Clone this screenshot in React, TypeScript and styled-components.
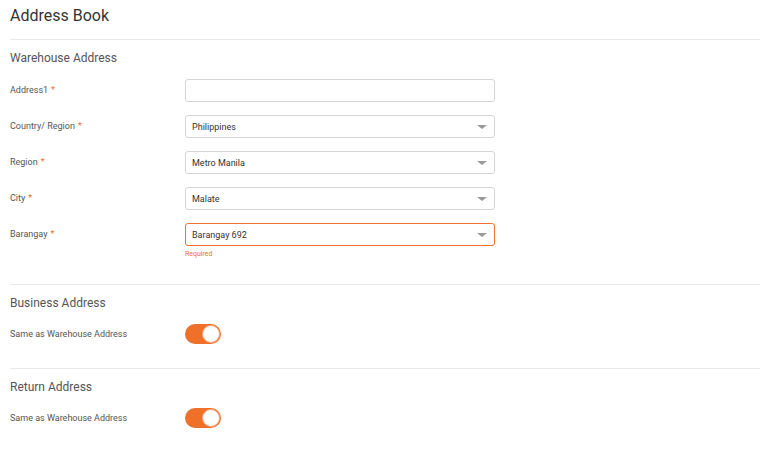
import styled, { createGlobalStyle } from "styled-components";

const GlobalStyle = createGlobalStyle`
    body {
        margin: 0;
        background: #fff;
        font-family: Roboto, "Liberation Sans", sans-serif;
        color: #333;
    }
`

const Page = styled.div`
    padding: 0 8px 0 10px;
    width: 768px;
    box-sizing: border-box;
`

const Header = styled.header`
    padding-bottom: 7px;
    border-bottom: 1px solid #e8e8e8;
`

const Title = styled.h1`
    margin: 0;
    font-size: 16px;
    font-weight: 400;
    line-height: 32px;
    color: #333;
`

const Section = styled.section<{ $bottom: number; $last?: boolean }>`
    padding: 8px 0 ${props => props.$bottom}px 0;
    border-bottom: ${props => props.$last ? 'none' : '1px solid #e8e8e8'};
    display: flex;
    flex-direction: column;
    gap: 13px;
`

const SectionTitle = styled.h2`
    margin: 0 0 -2px 0;
    font-size: 12px;
    font-weight: 400;
    line-height: 20px;
    color: #555;
`

const Row = styled.div`
    display: flex;
    align-items: flex-start;
`

const Label = styled.label`
    width: 175px;
    flex-shrink: 0;
    font-size: 9px;
    line-height: 22px;
    color: #555;
    span {
        color: #f0712c;
        margin-left: 3px;
    }
`

const Field = styled.div`
    width: 310px;
    display: flex;
    flex-direction: column;
`

const Box = styled.div<{ $error?: boolean }>`
    height: 23px;
    box-sizing: border-box;
    border: 1px solid ${props => props.$error ? '#f0712c' : '#d6d6d6'};
    border-radius: 3px;
    display: flex;
    align-items: center;
    justify-content: space-between;
    padding: 0 6px 0 6px;
    font-size: 9px;
    color: #333;
`

const Caret = styled.i`
    width: 0;
    height: 0;
    border-left: 5px solid transparent;
    border-right: 5px solid transparent;
    border-top: 4px solid #999;
    margin-right: 1px;
`

const ErrorText = styled.div`
    margin-top: 2px;
    font-size: 7px;
    line-height: 12px;
    color: #f0712c;
`

const Toggle = styled.div`
    width: 36px;
    height: 20px;
    border-radius: 10px;
    background: #ef7129;
    display: flex;
    align-items: center;
    justify-content: flex-end;
    padding: 0 1px;
    box-sizing: border-box;
    &::after {
        content: '';
        width: 18px;
        height: 18px;
        border-radius: 50%;
        background: #fff;
        box-sizing: border-box;
        border: 1px solid #f5a77a;
    }
`

const ToggleRow = styled(Row)`
    align-items: center;
    ${Label} { line-height: 20px; }
`

type SelectField = { label: string; value: string; error?: string }

const selects: SelectField[] = [
    { label: 'Country/ Region', value: 'Philippines' },
    { label: 'Region', value: 'Metro Manila' },
    { label: 'City', value: 'Malate' },
    { label: 'Barangay', value: 'Barangay 692', error: 'Required' },
]

export default function App() {
    return (
        <Page>
            <GlobalStyle />
            <Header>
                <Title>Address Book</Title>
            </Header>

            <Section $bottom={24}>
                <SectionTitle>Warehouse Address</SectionTitle>
                <Row>
                    <Label>Address1<span>*</span></Label>
                    <Field><Box /></Field>
                </Row>
                {selects.map(s => (
                    <Row key={s.label}>
                        <Label>{s.label}<span>*</span></Label>
                        <Field>
                            <Box $error={!!s.error}>
                                {s.value}
                                <Caret />
                            </Box>
                            {s.error && <ErrorText>{s.error}</ErrorText>}
                        </Field>
                    </Row>
                ))}
            </Section>

            <Section $bottom={24}>
                <SectionTitle>Business Address</SectionTitle>
                <ToggleRow>
                    <Label>Same as Warehouse Address</Label>
                    <Toggle />
                </ToggleRow>
            </Section>

            <Section $bottom={0} $last>
                <SectionTitle>Return Address</SectionTitle>
                <ToggleRow>
                    <Label>Same as Warehouse Address</Label>
                    <Toggle />
                </ToggleRow>
            </Section>
        </Page>
    )
}
